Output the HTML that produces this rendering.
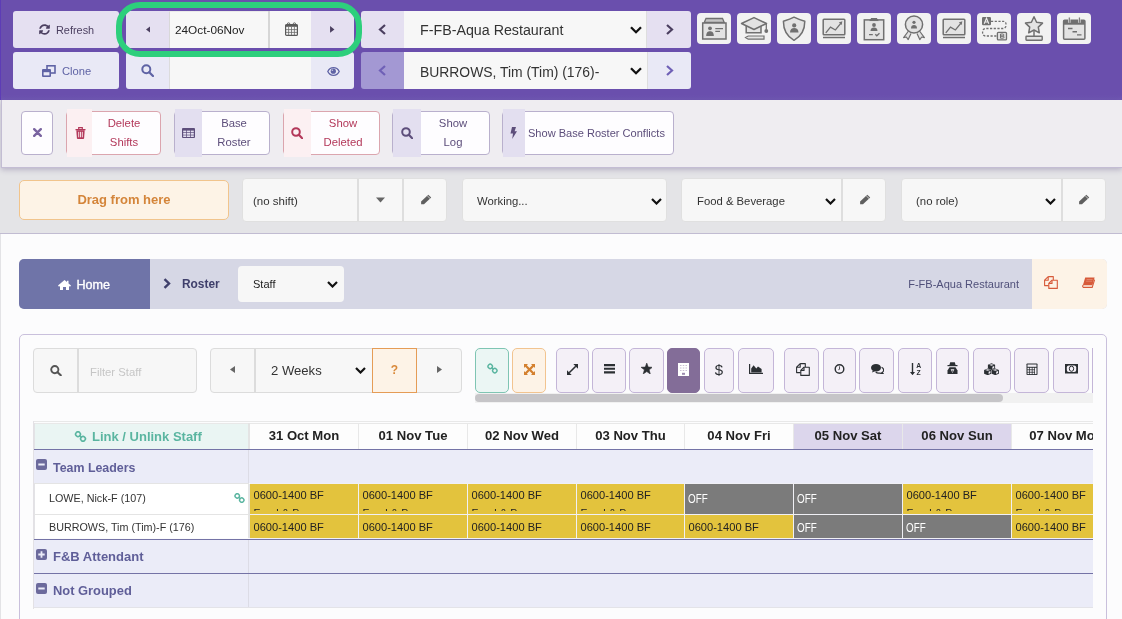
<!DOCTYPE html>
<html><head><meta charset="utf-8">
<style>
*{box-sizing:border-box;margin:0;padding:0}
body{will-change:transform}
html,body{width:1122px;height:619px;overflow:hidden;background:#fcfcfd;font-family:"Liberation Sans",sans-serif;color:#333}
.a{position:absolute}
svg{display:block}
#hdr{left:0;top:0;width:1122px;height:100px;background:linear-gradient(#6a4fad 0,#6a4fad 95px,#7058b3 100px)}
.b1{background:#e5e0f1}
.b2{background:#e9e9f6}
.inp{background:#f7f7f7}
.ib{background:#f2f2f2;border-radius:4px;width:34px;height:31px;top:13px}
#tb{left:1px;top:100px;width:1121px;height:68px;background:#efedf1;border-left:1px solid #c3bdd3;border-bottom:1px solid #c4bdd4;box-shadow:0 2px 5px rgba(80,60,120,.28)}
.tbtn{top:111px;height:44px;border:1px solid #b9b0cd;border-radius:4px;background:#fefdff}
.tbtn.red{border-color:#dba5ae}
.addon{top:109px;height:48px}
#fr{left:0;top:167px;width:1122px;height:67px;background:#e4e4e7;border-bottom:1px solid #c1bcd2}
.sel{top:178px;height:44px;background:#f7f7f7;border-radius:4px;border:1px solid #e0e0e0}
.dv{top:179px;height:42px;width:2px;background:#dedede}
</style></head><body>
<div id="hdr" class="a"></div>
<div class="a" style="left:0;top:0;width:1px;height:100px;background:#5d3cb6"></div>
<!-- row1 -->
<div class="a b1" style="left:13px;top:11px;width:106px;height:37px;border-radius:3px"></div>
<div class="a b1" style="left:126px;top:11px;width:43px;height:37px;border-radius:3px 0 0 3px"></div>
<div class="a inp" style="left:169px;top:11px;width:99px;height:37px;border-left:1px solid #d8d8d8;border-top:1px solid #ebebea"></div>
<div class="a" style="left:268px;top:11px;width:43px;height:37px;background:#f7f7f7;border-left:2px solid #d6d6d6"></div>
<div class="a b1" style="left:311px;top:11px;width:43px;height:37px;border-radius:0 3px 3px 0"></div>
<div class="a b1" style="left:361px;top:11px;width:43px;height:37px;border-radius:3px 0 0 3px"></div>
<div class="a inp" style="left:404px;top:11px;width:243px;height:37px;border-right:1px solid #dedede"></div>
<div class="a b1" style="left:647px;top:11px;width:44px;height:37px;border-radius:0 3px 3px 0"></div>
<div class="a ib" style="left:697px"></div>
<div class="a ib" style="left:737px"></div>
<div class="a ib" style="left:777px"></div>
<div class="a ib" style="left:817px"></div>
<div class="a ib" style="left:857px"></div>
<div class="a ib" style="left:897px"></div>
<div class="a ib" style="left:937px"></div>
<div class="a ib" style="left:977px"></div>
<div class="a ib" style="left:1017px"></div>
<div class="a ib" style="left:1057px"></div>
<!-- row2 -->
<div class="a b2" style="left:13px;top:52px;width:106px;height:37px;border-radius:3px"></div>
<div class="a b2" style="left:126px;top:52px;width:43px;height:37px;border-radius:3px 0 0 3px"></div>
<div class="a inp" style="left:169px;top:52px;width:142px;height:37px;border-left:1px solid #dcdcdc"></div>
<div class="a b2" style="left:311px;top:52px;width:43px;height:37px;border-radius:0 3px 3px 0"></div>
<div class="a" style="left:361px;top:52px;width:43px;height:37px;border-radius:3px 0 0 3px;background:#a398d3"></div>
<div class="a inp" style="left:404px;top:52px;width:243px;height:37px"></div>
<div class="a b2" style="left:647px;top:52px;width:44px;height:37px;border-radius:0 3px 3px 0;border-left:1px solid #dedede"></div>

<div class="a" style="left:697px;top:13px"><svg width="34" height="31" viewBox="0 0 34 31"><path d="M9 5.5H25.5L27.3 9.5H7.2z" fill="#c4c4c4" stroke="#707070" stroke-width="1.3"/><rect x="5.7" y="10" width="23.3" height="16" fill="#e3e3e3" stroke="#707070" stroke-width="1.5"/><circle cx="13" cy="15.3" r="1.9" fill="#707070"/><path d="M9.2 23C9.2 19.5 10.8 18.2 13 18.2S16.8 19.5 16.8 23z" fill="#707070"/><path d="M18.3 15.6H26M18.3 18.4H23" stroke="#707070" stroke-width="1.2"/></svg></div>
<div class="a" style="left:737px;top:13px"><svg width="34" height="31" viewBox="0 0 34 31"><path d="M9.2 13V19.7H24V13" fill="#e3e3e3" stroke="#707070" stroke-width="1.5"/><path d="M4.5 10.5L17 4.6L29.5 10.5L17 16.5z" fill="#e3e3e3" stroke="#707070" stroke-width="1.5" stroke-linejoin="round"/><path d="M29.3 10.5V16.5" stroke="#707070" stroke-width="1.3"/><circle cx="29.3" cy="18" r="1.9" fill="#707070"/><path d="M8.5 24.6L11.2 23H27V26.2H11.2z" fill="#e3e3e3" stroke="#707070" stroke-width="1.2"/></svg></div>
<div class="a" style="left:777px;top:13px"><svg width="34" height="31" viewBox="0 0 34 31"><path d="M17 4.2C13.5 6 9.5 7.3 6.4 8.3C6.4 17 10 23.5 17 27.3C24 23.5 27.8 17 27.8 8.3C24.5 7.3 20.5 6 17 4.2z" fill="#e3e3e3" stroke="#707070" stroke-width="1.5" stroke-linejoin="round"/><circle cx="17.2" cy="12.4" r="2.1" fill="#707070"/><path d="M13 19.6C13 16.4 14.8 15 17.2 15S21.5 16.4 21.5 19.6z" fill="#707070"/></svg></div>
<div class="a" style="left:817px;top:13px"><svg width="34" height="31" viewBox="0 0 34 31"><rect x="6.2" y="6.2" width="21.6" height="15.6" rx="0.8" fill="#e3e3e3" stroke="#707070" stroke-width="1.5"/><path d="M6 24.5H28" stroke="#707070" stroke-width="1.5"/><path d="M8.8 19.8L13.5 14.2L18.4 17L24.2 9.8" fill="none" stroke="#707070" stroke-width="1.3"/><path d="M25.3 8.3L21.8 9.5L24.6 12z" fill="#707070"/></svg></div>
<div class="a" style="left:857px;top:13px"><svg width="34" height="31" viewBox="0 0 34 31"><rect x="7.3" y="6.9" width="19.4" height="19.8" fill="#e3e3e3" stroke="#707070" stroke-width="1.5"/><path d="M13.2 7.6L14.5 5.5H19.5L20.8 7.6z" fill="#707070" stroke="#707070" stroke-width="1.2"/><rect x="9" y="8.2" width="16" height="17" fill="#e3e3e3"/><circle cx="17" cy="12" r="1.9" fill="#707070"/><path d="M13.5 18C13.5 15.5 15 14.4 17 14.4S20.5 15.5 20.5 18z" fill="#707070"/><path d="M12 21.7H15.8M18.3 21.3L19.8 22.8L22.5 20.2" fill="none" stroke="#707070" stroke-width="1.3"/></svg></div>
<div class="a" style="left:897px;top:13px"><svg width="34" height="31" viewBox="0 0 34 31"><path d="M11.5 18L6.6 24.6L9.3 24L11.2 26.6L14 20.5M22.5 18L27.4 24.6L24.7 24L22.8 26.6L20 20.5" fill="#e3e3e3" stroke="#707070" stroke-width="1.2" stroke-linejoin="round"/><circle cx="17" cy="11.5" r="8.6" fill="#e3e3e3" stroke="#707070" stroke-width="1.5"/><circle cx="17" cy="9.3" r="1.6" fill="#707070"/><path d="M14 15.4C14 13 15.3 12 17 12S20 13 20 15.4z" fill="#707070"/></svg></div>
<div class="a" style="left:937px;top:13px"><svg width="34" height="31" viewBox="0 0 34 31"><rect x="6.2" y="6.2" width="21.6" height="15.6" rx="0.8" fill="#e3e3e3" stroke="#707070" stroke-width="1.5"/><path d="M6 24.5H28" stroke="#707070" stroke-width="1.5"/><path d="M8.8 19.8L13.5 14.2L18.4 17L24.2 9.8" fill="none" stroke="#707070" stroke-width="1.3"/><path d="M25.3 8.3L21.8 9.5L24.6 12z" fill="#707070"/></svg></div>
<div class="a" style="left:977px;top:13px"><svg width="34" height="31" viewBox="0 0 34 31"><path d="M14 8.3H26.5A2.8 2.8 0 0 1 29 11.4V12.5A3 3 0 0 1 26 15.5H8.6A3 3 0 0 0 5.6 18.5V20A3 3 0 0 0 8.6 23H20" fill="none" stroke="#707070" stroke-width="1.3" stroke-dasharray="2.2 1.5"/><rect x="5" y="4" width="9" height="8.2" rx="1.2" fill="#707070"/><path d="M7.2 10.8L9.5 5.2L11.8 10.8M8.2 9H10.8" stroke="#eee" stroke-width="1.1" fill="none"/><rect x="20.4" y="19.3" width="9.1" height="7.6" rx="1" fill="#e3e3e3" stroke="#707070" stroke-width="1.3"/><path d="M23.5 21V25.2H26A1 1 0 0 0 26 23.1H23.5H25.8A1 1 0 0 0 25.8 21z" fill="none" stroke="#707070" stroke-width="1"/></svg></div>
<div class="a" style="left:1017px;top:13px"><svg width="34" height="31" viewBox="0 0 34 31"><path d="M17 3.8L19.6 9.3L25.5 10.1L21.3 14.1L22.3 19.8L17 17L11.7 19.8L12.7 14.1L8.5 10.1L14.4 9.3z" fill="#e3e3e3" stroke="#707070" stroke-width="1.5" stroke-linejoin="round"/><path d="M17 17.5V23" stroke="#707070" stroke-width="1.5"/><rect x="9" y="23.2" width="16.2" height="4" rx="0.6" fill="#e3e3e3" stroke="#707070" stroke-width="1.4"/></svg></div>
<div class="a" style="left:1057px;top:13px"><svg width="34" height="31" viewBox="0 0 34 31"><rect x="6.6" y="7.2" width="21.3" height="19" rx="1" fill="#e3e3e3" stroke="#707070" stroke-width="1.5"/><rect x="6.6" y="7.2" width="21.3" height="4.5" fill="#707070"/><path d="M12.3 4.5V9.8M22.4 4.5V9.8" stroke="#e3e3e3" stroke-width="2.4"/><path d="M12.3 4.5V9.8M22.4 4.5V9.8" stroke="#707070" stroke-width="1"/><path d="M11 15.5H15.5M15.5 18.7H20M20 21.9H24.5" stroke="#707070" stroke-width="1.4"/></svg></div>
<!-- header content -->
<div class="a" style="left:39px;top:24px;width:11px;height:11px"><svg width="11" height="11" viewBox="0 0 512 512"><path fill="#4b3f60" d="M370.7 133.3C339.5 104 298.9 88 255.8 88c-77.5.1-144.3 53.2-162.8 126.9-1.300 5.4-6.1 9.2-11.7 9.2H24.1c-7.5 0-13.2-6.8-11.8-14.2C33.9 94.9 134.8 8 256 8c66.4 0 126.8 26.1 171.3 68.7L463 41C478.1 25.9 504 36.6 504 57.9V192c0 13.3-10.7 24-24 24H345.9c-21.4 0-32.1-25.9-17-41l41.8-41.7zM32 296h134.1c21.4 0 32.1 25.9 17 41l-41.8 41.8c31.3 29.3 71.8 45.3 114.9 45.2 77.4-.1 144.3-53.1 162.8-126.8 1.3-5.4 6.1-9.2 11.7-9.2h57.3c7.5 0 13.2 6.8 11.8 14.2C478.1 417.1 377.2 504 256 504c-66.4 0-126.8-26.1-171.3-68.7L49 471C33.900 486.1 8 475.4 8 454.1V320c0-13.3 10.7-24 24-24z"/></svg></div>
<div class="a" style="left:56px;top:22px;font-size:10.9px;line-height:16px;color:#4b3f60">Refresh</div>
<div class="a" style="left:42px;top:65px;width:14px;height:12px"><svg width="14" height="12" viewBox="0 0 14 12"><rect x="5" y="0.8" width="8" height="7.2" fill="none" stroke="#5f63a5" stroke-width="1.6"/><rect x="0" y="4" width="9" height="8" rx="1" fill="#5f63a5"/><rect x="1.6" y="7.2" width="5.8" height="3.2" fill="#e9e9f6"/></svg></div>
<div class="a" style="left:62px;top:62.8px;font-size:11.2px;line-height:16px;color:#5f63a5">Clone</div>
<div class="a" style="left:145.8px;top:26px"><svg width="4.5" height="7" viewBox="0 0 4.5 7"><path d="M4.5 0L0 3.5L4.5 7z" fill="#4b3f60"/></svg></div>
<div class="a" style="left:175px;top:22px;font-size:11.8px;line-height:16px;color:#222">24Oct-06Nov</div>
<div class="a" style="left:285px;top:21.5px"><svg width="13" height="14" viewBox="0 0 13 14"><rect x="0.6" y="2.6" width="11.8" height="10.8" rx="1" fill="#f7f7f7" stroke="#5a5a5a" stroke-width="1.2"/><rect x="0.6" y="2.6" width="11.8" height="2.2" fill="#5a5a5a"/><circle cx="3.6" cy="2" r="1.2" fill="none" stroke="#5a5a5a" stroke-width="0.9"/><circle cx="9.4" cy="2" r="1.2" fill="none" stroke="#5a5a5a" stroke-width="0.9"/><path d="M3.6 4.8V13M6.5 4.8V13M9.4 4.8V13M1 7.6H12M1 10.4H12" stroke="#6a6a6a" stroke-width="0.8"/></svg></div>
<div class="a" style="left:330px;top:26.2px"><svg width="4.5" height="6.8" viewBox="0 0 4.5 7"><path d="M0 0L4.5 3.5L0 7z" fill="#4b3f60"/></svg></div>
<div class="a" style="left:141px;top:64px"><svg width="13" height="13" viewBox="0 0 13 13"><circle cx="5.3" cy="5.3" r="4" fill="none" stroke="#5f63a5" stroke-width="2"/><path d="M8.2 8.2L12 12" stroke="#5f63a5" stroke-width="2.2" stroke-linecap="round"/></svg></div>
<div class="a" style="left:326.5px;top:66.5px"><svg width="13" height="9" viewBox="0 0 13 9"><path d="M6.5 0.7C3.8 0.7 1.7 2.6 0.8 4.5C1.7 6.4 3.8 8.3 6.5 8.3S11.3 6.4 12.2 4.5C11.3 2.6 9.2 0.7 6.5 0.7z" fill="none" stroke="#5f63a5" stroke-width="1.3"/><circle cx="6.3" cy="4.2" r="2.6" fill="#5f63a5"/><circle cx="5.4" cy="3.2" r="0.8" fill="#c9cae6"/></svg></div>
<div class="a" style="left:378px;top:24px"><svg width="9" height="11" viewBox="0 0 9 11"><path d="M7 1L2 5.5L7 10" fill="none" stroke="#4b3f60" stroke-width="2.2"/></svg></div>
<div class="a" style="left:378px;top:65px"><svg width="9" height="11" viewBox="0 0 9 11"><path d="M7 1L2 5.5L7 10" fill="none" stroke="#6f60b6" stroke-width="2.2"/></svg></div>
<div class="a" style="left:665px;top:24px"><svg width="9" height="11" viewBox="0 0 9 11"><path d="M2 1L7 5.5L2 10" fill="none" stroke="#4b3f60" stroke-width="2.2"/></svg></div>
<div class="a" style="left:665px;top:65px"><svg width="9" height="11" viewBox="0 0 9 11"><path d="M2 1L7 5.5L2 10" fill="none" stroke="#6f60b6" stroke-width="2.2"/></svg></div>
<div class="a" style="left:420px;top:21px;font-size:14.25px;line-height:18px;color:#333;white-space:nowrap">F-FB-Aqua Restaurant</div>
<div class="a" style="left:420px;top:62.5px;font-size:13.9px;line-height:18px;color:#333;white-space:nowrap">BURROWS, Tim (Tim) (176)-</div>
<div class="a" style="left:630px;top:26px"><svg width="12" height="8" viewBox="0 0 12 8"><path d="M1 1.2L6 6.2L11 1.2" fill="none" stroke="#111" stroke-width="2.3"/></svg></div>
<div class="a" style="left:630px;top:67px"><svg width="12" height="8" viewBox="0 0 12 8"><path d="M1 1.2L6 6.2L11 1.2" fill="none" stroke="#111" stroke-width="2.3"/></svg></div>
<!-- green ring -->
<div class="a" style="left:116px;top:2px;width:246px;height:55px;border:6px solid #2dcf7c;border-radius:24px"></div>

<div class="a" style="left:0;top:100px;width:1px;height:519px;background:#e3e3e6"></div>
<div id="fr" class="a"></div>
<div id="tb" class="a"></div>
<div class="a tbtn" style="left:21px;width:32px"></div>
<div class="a tbtn red" style="left:66px;width:95px"></div>
<div class="a addon" style="left:67px;width:25px;background:#fcf0f2"></div>
<div class="a tbtn" style="left:174px;width:96px"></div>
<div class="a addon" style="left:175px;width:27px;background:#e3dff0"></div>
<div class="a tbtn red" style="left:283px;width:97px"></div>
<div class="a addon" style="left:284px;width:27px;background:#fcf0f2"></div>
<div class="a tbtn" style="left:392px;width:98px"></div>
<div class="a addon" style="left:393px;width:28px;background:#e3dff0"></div>
<div class="a tbtn" style="left:502px;width:172px"></div>
<div class="a addon" style="left:503px;width:22px;background:#e3dff0"></div>
<div class="a" style="left:33px;top:128px"><svg width="9" height="9" viewBox="0 0 9 9"><path d="M1.2 1.2L7.8 7.8M7.8 1.2L1.2 7.8" stroke="#7a64a0" stroke-width="2.4" stroke-linecap="round"/></svg></div>
<div class="a" style="left:74.5px;top:127px"><svg width="11" height="12" viewBox="0 0 11 12"><path d="M0.5 2H10.5V3.3H0.5z" fill="#b3385a"/><path d="M3.7 2V0.6H7.3V2" fill="none" stroke="#b3385a" stroke-width="1.2"/><path d="M1.3 3.3H9.7L9.1 11.2Q9 12 8.2 12H2.8Q2 12 1.9 11.2z" fill="#b3385a"/><path d="M3.7 4.8V10.3M5.5 4.8V10.3M7.3 4.8V10.3" stroke="#fcf0f2" stroke-width="0.9"/></svg></div>
<div class="a" style="left:74px;top:114px;width:100px;text-align:center;font-size:11.3px;line-height:18.6px;color:#b3385a">Delete<br>Shifts</div>
<div class="a" style="left:182px;top:128px"><svg width="13" height="10" viewBox="0 0 13 10"><rect x="0" y="0" width="13" height="10" rx="1" fill="#5d4e7b"/><g fill="#e3dff0"><rect x="1.2" y="2.6" width="3.1" height="1.7"/><rect x="5" y="2.6" width="3.1" height="1.7"/><rect x="8.8" y="2.6" width="3" height="1.7"/><rect x="1.2" y="5" width="3.1" height="1.7"/><rect x="5" y="5" width="3.1" height="1.7"/><rect x="8.8" y="5" width="3" height="1.7"/><rect x="1.2" y="7.4" width="3.1" height="1.6"/><rect x="5" y="7.4" width="3.1" height="1.6"/><rect x="8.8" y="7.4" width="3" height="1.6"/></g></svg></div>
<div class="a" style="left:184px;top:114px;width:100px;text-align:center;font-size:11.3px;line-height:18.6px;color:#5d4e7b">Base<br>Roster</div>
<div class="a" style="left:291px;top:127px"><svg width="12" height="12" viewBox="0 0 12 12"><circle cx="5" cy="5" r="3.8" fill="none" stroke="#b3385a" stroke-width="2"/><path d="M7.8 7.8L11.2 11.2" stroke="#b3385a" stroke-width="2.2" stroke-linecap="round"/></svg></div>
<div class="a" style="left:293px;top:114px;width:100px;text-align:center;font-size:11.3px;line-height:18.6px;color:#b3385a">Show<br>Deleted</div>
<div class="a" style="left:401px;top:127px"><svg width="12" height="12" viewBox="0 0 12 12"><circle cx="5" cy="5" r="3.8" fill="none" stroke="#5d4e7b" stroke-width="2"/><path d="M7.8 7.8L11.2 11.2" stroke="#5d4e7b" stroke-width="2.2" stroke-linecap="round"/></svg></div>
<div class="a" style="left:403px;top:114px;width:100px;text-align:center;font-size:11.3px;line-height:18.6px;color:#5d4e7b">Show<br>Log</div>
<div class="a" style="left:510px;top:127px"><svg width="7" height="12" viewBox="0 0 7 12"><path d="M2 0H6L4.6 4.3H7L2.2 12L3 6.5H0.5z" fill="#5d4e7b"/></svg></div>
<div class="a" style="left:528px;top:123.7px;font-size:11.05px;line-height:18px;color:#5d4e7b;white-space:nowrap">Show Base Roster Conflicts</div>
<div class="a" style="left:19px;top:180px;width:210px;height:40px;background:#fdf3e6;border:1px solid #f1c48c;border-radius:5px"></div>
<div class="a sel" style="left:242px;width:205px"></div>
<div class="a dv" style="left:357px"></div>
<div class="a dv" style="left:402px"></div>
<div class="a sel" style="left:462px;width:205px"></div>
<div class="a sel" style="left:681px;width:205px"></div>
<div class="a dv" style="left:841px"></div>
<div class="a sel" style="left:901px;width:205px"></div>
<div class="a dv" style="left:1061px"></div>
<div class="a" style="left:19px;top:192px;width:210px;text-align:center;font-size:13px;line-height:16px;font-weight:bold;color:#d4853a">Drag from here</div>
<div class="a" style="left:253px;top:192.5px;font-size:11.5px;line-height:16px;color:#333">(no shift)</div>
<div class="a" style="left:376px;top:197px"><svg width="9" height="6" viewBox="0 0 9 6"><path d="M0 0.5H9L4.5 5.5z" fill="#666"/></svg></div>
<div class="a" style="left:420px;top:194px"><svg width="12" height="11" viewBox="0 0 12 11"><path d="M8.3 0.8L11.2 3.4L4 10.2H1.1V7.4z" fill="#5f5f5f"/><path d="M7.2 1.8L10.1 4.5" stroke="#f7f7f7" stroke-width="0.7"/></svg></div>
<div class="a" style="left:477px;top:192.5px;font-size:11.3px;line-height:16px;color:#333">Working...</div>
<div class="a" style="left:650.5px;top:197.5px"><svg width="11" height="7" viewBox="0 0 11 7"><path d="M1 1L5.5 5.5L10 1" fill="none" stroke="#111" stroke-width="2.2"/></svg></div>
<div class="a" style="left:697px;top:192.5px;font-size:11.3px;line-height:16px;color:#333">Food &amp; Beverage</div>
<div class="a" style="left:825px;top:197.5px"><svg width="11" height="7" viewBox="0 0 11 7"><path d="M1 1L5.5 5.5L10 1" fill="none" stroke="#111" stroke-width="2.2"/></svg></div>
<div class="a" style="left:859px;top:194px"><svg width="12" height="11" viewBox="0 0 12 11"><path d="M8.3 0.8L11.2 3.4L4 10.2H1.1V7.4z" fill="#5f5f5f"/><path d="M7.2 1.8L10.1 4.5" stroke="#f7f7f7" stroke-width="0.7"/></svg></div>
<div class="a" style="left:916px;top:192.5px;font-size:11.4px;line-height:16px;color:#333">(no role)</div>
<div class="a" style="left:1045px;top:197.5px"><svg width="11" height="7" viewBox="0 0 11 7"><path d="M1 1L5.5 5.5L10 1" fill="none" stroke="#111" stroke-width="2.2"/></svg></div>
<div class="a" style="left:1078px;top:194px"><svg width="12" height="11" viewBox="0 0 12 11"><path d="M8.3 0.8L11.2 3.4L4 10.2H1.1V7.4z" fill="#5f5f5f"/><path d="M7.2 1.8L10.1 4.5" stroke="#f7f7f7" stroke-width="0.7"/></svg></div>
<div class="a" style="left:19px;top:259px;width:1088px;height:50px;background:#d6d7e5;border-radius:5px"></div>
<div class="a" style="left:19px;top:259px;width:131px;height:50px;background:#6f74a8;border-radius:5px 0 0 5px"></div>
<div class="a" style="left:1032px;top:259px;width:75px;height:50px;background:#fdf3e7;border-radius:0 5px 5px 0"></div>
<div class="a" style="left:238px;top:266px;width:106px;height:36px;background:#f7f7f7;border-radius:4px"></div>
<div class="a" style="left:58px;top:279.5px"><svg width="13" height="10" viewBox="0 0 13 10"><path d="M6.5 0L0 5.6L1 6.7L2 5.9V10H5V7H8V10H11V5.9L12 6.7L13 5.6L10.5 3.4V0.8H9V2.1z" fill="#fff"/></svg></div>
<div class="a" style="left:76.5px;top:277px;font-size:12.6px;line-height:16px;color:#fff;-webkit-text-stroke:0.35px #fff">Home</div>
<div class="a" style="left:163px;top:277.5px"><svg width="8" height="11" viewBox="0 0 8 11"><path d="M1.5 1.2L6 5.5L1.5 9.8" fill="none" stroke="#3f3f6b" stroke-width="2.4"/></svg></div>
<div class="a" style="left:182px;top:275.5px;font-size:11.9px;line-height:16px;font-weight:bold;color:#3f3f6b">Roster</div>
<div class="a" style="left:253px;top:275.5px;font-size:11.04px;line-height:16px;color:#222">Staff</div>
<div class="a" style="left:327px;top:281px"><svg width="11" height="7" viewBox="0 0 11 7"><path d="M1 1L5.5 5.5L10 1" fill="none" stroke="#111" stroke-width="2.2"/></svg></div>
<div class="a" style="left:808px;top:275.5px;width:211px;text-align:right;font-size:11.03px;line-height:16px;color:#50507a;white-space:nowrap">F-FB-Aqua Restaurant</div>
<div class="a" style="left:1043.5px;top:276px"><svg width="14" height="13" viewBox="0 0 14 13"><path d="M4.2 0.6H9.3V4.2M4.2 0.6L0.6 4.2V9.6H4.8M4.2 0.6V4.2H0.6" fill="none" stroke="#d75a3a" stroke-width="1.1" stroke-linejoin="round"/><path d="M8 4.2H13.3V12.4H4.8V7.4z" fill="#fdf3e7" stroke="#d75a3a" stroke-width="1.1" stroke-linejoin="round"/><path d="M8 4.2V7.4H4.8" fill="none" stroke="#d75a3a" stroke-width="1.1"/></svg></div>
<div class="a" style="left:1082px;top:277px"><svg width="13" height="11" viewBox="0 0 13 11"><path d="M3.2 0.4H12.6L10.4 8.2H0.9z" fill="#d75a3a"/><path d="M1.2 8.2Q0 9.4 1.3 10.4H10.2L12.6 2.6" fill="none" stroke="#d75a3a" stroke-width="1.1"/><path d="M4.6 2.5H10.6M4.1 4.2H10.1" stroke="#e9a08a" stroke-width="0.6"/></svg></div>
<div class="a" style="left:19px;top:334px;width:1088px;height:300px;border:1px solid #c9c0dc;border-radius:5px;background:#fcfcfd"></div>
<div class="a" style="left:33px;top:348px;width:164px;height:45px;background:#f7f7f7;border:1px solid #dcdcdc;border-radius:4px"></div>
<div class="a" style="left:77px;top:349px;width:2px;height:43px;background:#dcdcdc"></div>
<div class="a" style="left:90px;top:363.5px;font-size:11.3px;line-height:16px;color:#c6c6c6">Filter Staff</div>
<div class="a" style="left:50px;top:365px"><svg width="12" height="11" viewBox="0 0 12 11"><circle cx="4.8" cy="4.6" r="3.6" fill="none" stroke="#555" stroke-width="1.9"/><path d="M7.5 7.3L10.8 10.3" stroke="#555" stroke-width="2.1" stroke-linecap="round"/></svg></div>
<div class="a" style="left:210px;top:348px;width:252px;height:45px;background:#f7f7f7;border:1px solid #dcdcdc;border-radius:4px"></div>
<div class="a" style="left:254px;top:349px;width:2px;height:43px;background:#dcdcdc"></div>
<div class="a" style="left:372px;top:348px;width:45px;height:45px;background:#fdf3e7;border:1px solid #e59c56"></div>
<div class="a" style="left:271px;top:362.5px;font-size:13.1px;line-height:16px;color:#333">2 Weeks</div>
<div class="a" style="left:372px;top:361.5px;width:45px;text-align:center;font-size:12px;line-height:16px;font-weight:bold;color:#d9893a">?</div>
<div class="a" style="left:230px;top:366px"><svg width="5" height="7" viewBox="0 0 5 7"><path d="M5 0L0 3.5L5 7z" fill="#666"/></svg></div>
<div class="a" style="left:437px;top:366px"><svg width="5" height="7" viewBox="0 0 5 7"><path d="M0 0L5 3.5L0 7z" fill="#666"/></svg></div>
<div class="a" style="left:355px;top:367px"><svg width="11" height="7" viewBox="0 0 11 7"><path d="M1 1L5.5 5.5L10 1" fill="none" stroke="#111" stroke-width="2.2"/></svg></div>
<div class="a" style="left:475px;top:348px;width:34px;height:45px;border-radius:5px;background:#ebf6f4;border:1px solid #7fc5b3"></div>
<div class="a" style="left:512px;top:348px;width:34px;height:45px;border-radius:5px;background:#fdf3e7;border:1px solid #f2c490"></div>
<div class="a" style="left:556px;top:348px;width:33px;height:45px;border-radius:5px;background:#f4f0f7;border:1px solid #c4b6d8"></div>
<div class="a" style="left:592px;top:348px;width:34px;height:45px;border-radius:5px;background:#f4f0f7;border:1px solid #c4b6d8"></div>
<div class="a" style="left:629px;top:348px;width:35px;height:45px;border-radius:5px;background:#f4f0f7;border:1px solid #c4b6d8"></div>
<div class="a" style="left:667px;top:348px;width:33px;height:45px;border-radius:5px;background:#836d98;border:1px solid #836d98"></div>
<div class="a" style="left:704px;top:348px;width:30px;height:45px;border-radius:5px;background:#f4f0f7;border:1px solid #c4b6d8"></div>
<div class="a" style="left:738px;top:348px;width:36px;height:45px;border-radius:5px;background:#f4f0f7;border:1px solid #c4b6d8"></div>
<div class="a" style="left:784px;top:348px;width:35px;height:45px;border-radius:5px;background:#f4f0f7;border:1px solid #c4b6d8"></div>
<div class="a" style="left:823px;top:348px;width:33px;height:45px;border-radius:5px;background:#f4f0f7;border:1px solid #c4b6d8"></div>
<div class="a" style="left:859px;top:348px;width:35px;height:45px;border-radius:5px;background:#f4f0f7;border:1px solid #c4b6d8"></div>
<div class="a" style="left:898px;top:348px;width:34px;height:45px;border-radius:5px;background:#f4f0f7;border:1px solid #c4b6d8"></div>
<div class="a" style="left:936px;top:348px;width:33px;height:45px;border-radius:5px;background:#f4f0f7;border:1px solid #c4b6d8"></div>
<div class="a" style="left:973px;top:348px;width:38px;height:45px;border-radius:5px;background:#f4f0f7;border:1px solid #c4b6d8"></div>
<div class="a" style="left:1014px;top:348px;width:35px;height:45px;border-radius:5px;background:#f4f0f7;border:1px solid #c4b6d8"></div>
<div class="a" style="left:1053px;top:348px;width:36px;height:45px;border-radius:5px;background:#f4f0f7;border:1px solid #c4b6d8"></div>
<div class="a" style="left:1092px;top:348px;width:1px;height:45px;background:#c4b6d8"></div>
<div class="a" style="left:475px;top:393px;width:618px;height:10px;background:#f1f1f1"></div>
<div class="a" style="left:475px;top:394px;width:528px;height:8px;background:#c6c5c8;border-radius:4px"></div>
<div class="a" style="left:487px;top:363px"><svg width="11" height="11" viewBox="0 0 12 11"><g fill="none" stroke="#5ab5a0" stroke-width="1.6"><rect x="1.2" y="0.9" width="4.6" height="4.6" rx="2.1" transform="rotate(45 3.5 3.2)"/><rect x="6.2" y="5.5" width="4.6" height="4.6" rx="2.1" transform="rotate(45 8.5 7.8)"/><path d="M5 4.7L7 6.3"/></g></svg></div>
<div class="a" style="left:524px;top:363.5px"><svg width="11" height="11" viewBox="0 0 11 11"><path d="M0 0H4L2.8 1.2L5.5 3.9L8.2 1.2L7 0H11V4L9.8 2.8L7.1 5.5L9.8 8.2L11 7V11H7L8.2 9.8L5.5 7.1L2.8 9.8L4 11H0V7L1.2 8.2L3.9 5.5L1.2 2.8L0 4z" fill="#d4802e"/></svg></div>
<div class="a" style="left:567px;top:363.5px"><svg width="11" height="11" viewBox="0 0 11 11"><path d="M6.3 0H11V4.7z" fill="#2b2f33"/><path d="M0 6.3V11H4.7z" fill="#2b2f33"/><path d="M2.2 8.8L8.8 2.2" stroke="#2b2f33" stroke-width="1.6"/></svg></div>
<div class="a" style="left:604px;top:364px"><svg width="11" height="9.5" viewBox="0 0 11 9.5"><path d="M0 1.1H11M0 4.75H11M0 8.4H11" stroke="#2b2f33" stroke-width="2.1"/></svg></div>
<div class="a" style="left:640.5px;top:362.8px"><svg width="11.5" height="11.5" viewBox="0 0 11.5 11.5"><path d="M5.75 0.10L7.22 4.08L11.46 4.25L8.13 6.87L9.28 10.95L5.75 8.60L2.22 10.95L3.37 6.87L0.04 4.25L4.28 4.08z" fill="#2b2f33" stroke="#2b2f33" stroke-width="0.6" stroke-linejoin="round"/></svg></div>
<div class="a" style="left:678px;top:362.5px"><svg width="11" height="13" viewBox="0 0 11 13"><rect x="0" y="0" width="11" height="13" fill="#fff"/><g fill="#c9bfd3"><rect x="2" y="2" width="1.5" height="1"/><rect x="4.75" y="2" width="1.5" height="1"/><rect x="7.5" y="2" width="1.5" height="1"/><rect x="2" y="4.5" width="1.5" height="1"/><rect x="4.75" y="4.5" width="1.5" height="1"/><rect x="7.5" y="4.5" width="1.5" height="1"/><rect x="2" y="7" width="1.5" height="1"/><rect x="4.75" y="7" width="1.5" height="1"/><rect x="7.5" y="7" width="1.5" height="1"/></g><rect x="4" y="9.8" width="3" height="2" fill="#9c8aae"/></svg></div>
<div class="a" style="left:713.5px;top:360.5px;width:11px;text-align:center;font-size:15px;line-height:17px;color:#2b2f33">$</div>
<div class="a" style="left:749px;top:364px"><svg width="14" height="10" viewBox="0 0 14 10"><path d="M0.6 0V9.4H14" fill="none" stroke="#2b2f33" stroke-width="1.2"/><path d="M2.2 8.4V4.6L4.6 1.2L7.3 4.4L9 2.6L12.6 5V8.4z" fill="#2b2f33"/></svg></div>
<div class="a" style="left:795.5px;top:363px"><svg width="14" height="13" viewBox="0 0 14 13"><path d="M4.2 0.6H9.3V4.2M4.2 0.6L0.6 4.2V9.6H4.8M4.2 0.6V4.2H0.6" fill="none" stroke="#2b2f33" stroke-width="1.1" stroke-linejoin="round"/><path d="M8 4.2H13.3V12.4H4.8V7.4z" fill="#f4f0f7" stroke="#2b2f33" stroke-width="1.1" stroke-linejoin="round"/><path d="M8 4.2V7.4H4.8" fill="none" stroke="#2b2f33" stroke-width="1.1"/></svg></div>
<div class="a" style="left:834px;top:363.8px"><svg width="11" height="10" viewBox="0 0 11 10"><circle cx="5.5" cy="5" r="4.3" fill="none" stroke="#2b2f33" stroke-width="1.4"/><path d="M5.5 2.3V5.3L4.3 5.8" fill="none" stroke="#2b2f33" stroke-width="0.8"/></svg></div>
<div class="a" style="left:871px;top:364px"><svg width="13" height="10" viewBox="0 0 13 10"><ellipse cx="5" cy="3.8" rx="5" ry="3.8" fill="#2b2f33"/><path d="M1.8 6.5L1 8.5L4 7.2z" fill="#2b2f33"/><path d="M10.6 3.2Q13 4.5 12.6 6.6Q12.2 8 11 8.6L12.3 10L9 9.1Q6 9.6 4.7 7.9" fill="none" stroke="#2b2f33" stroke-width="1.2"/></svg></div>
<div class="a" style="left:909.5px;top:362.8px"><svg width="12" height="12.5" viewBox="0 0 12 12.5"><path d="M2.5 0V11" stroke="#2b2f33" stroke-width="1.4"/><path d="M0 9L2.5 12.2L5 9z" fill="#2b2f33"/><text x="8.6" y="5.4" font-family="Liberation Sans" font-weight="bold" font-size="6.8" text-anchor="middle" fill="#2b2f33">A</text><text x="8.6" y="12.3" font-family="Liberation Sans" font-weight="bold" font-size="6.8" text-anchor="middle" fill="#2b2f33">Z</text></svg></div>
<div class="a" style="left:947px;top:362.3px"><svg width="11" height="12" viewBox="0 0 11 12"><path d="M3.2 0.3H7.8L8.6 3H2.4z" fill="#2b2f33"/><rect x="0.5" y="3" width="10" height="1.2" fill="#2b2f33"/><path d="M2.5 5.2H8.5L10.5 8.5V12H0.5V8.5z" fill="#2b2f33"/><path d="M3.6 7.3L5.5 11L7.4 7.3" fill="#f4f0f7"/><path d="M4.8 8.4L5.5 10.2L6.2 8.4" fill="#2b2f33"/></svg></div>
<div class="a" style="left:984px;top:362.5px"><svg width="15" height="12.5" viewBox="0 0 15 12.5"><path d="M3.90 1.80L7.50 0.30L11.10 1.80V5.60L7.50 7.10L3.90 5.60z" fill="#2b2f33"/><path d="M5.00 1.85L7.50 1.20L10.00 1.85L7.50 2.70z" fill="#f4f0f7"/><path d="M8.40 3.70L10.20 2.90V5.00L8.40 5.90z" fill="#f4f0f7"/><path d="M0.10 6.90L3.70 5.40L7.30 6.90V10.70L3.70 12.20L0.10 10.70z" fill="#2b2f33"/><path d="M1.20 6.95L3.70 6.30L6.20 6.95L3.70 7.80z" fill="#f4f0f7"/><path d="M4.60 8.80L6.40 8.00V10.10L4.60 11.00z" fill="#f4f0f7"/><path d="M7.70 6.90L11.30 5.40L14.90 6.90V10.70L11.30 12.20L7.70 10.70z" fill="#2b2f33"/><path d="M8.80 6.95L11.30 6.30L13.80 6.95L11.30 7.80z" fill="#f4f0f7"/><path d="M12.20 8.80L14.00 8.00V10.10L12.20 11.00z" fill="#f4f0f7"/></svg></div>
<div class="a" style="left:1026px;top:363px"><svg width="12" height="12" viewBox="0 0 12 12"><rect x="0.5" y="0.5" width="11" height="11.5" rx="0.8" fill="#2b2f33"/><rect x="1.5" y="1.5" width="9" height="2.3" fill="#f4f0f7"/><g fill="#f4f0f7"><rect x="1.5" y="4.8" width="1.8" height="1.6"/><rect x="4" y="4.8" width="1.8" height="1.6"/><rect x="6.5" y="4.8" width="1.8" height="1.6"/><rect x="1.5" y="7.2" width="1.8" height="1.6"/><rect x="4" y="7.2" width="1.8" height="1.6"/><rect x="6.5" y="7.2" width="1.8" height="1.6"/><rect x="1.5" y="9.6" width="1.8" height="1.5"/><rect x="4" y="9.6" width="1.8" height="1.5"/><rect x="6.5" y="9.6" width="1.8" height="1.5"/><rect x="9" y="4.8" width="1.5" height="6.3"/></g></svg></div>
<div class="a" style="left:1064.5px;top:364px"><svg width="13" height="9.5" viewBox="0 0 13 9.5"><rect x="0" y="0" width="13" height="9.5" fill="#2b2f33"/><rect x="1.8" y="1.5" width="9.4" height="6.5" rx="2" fill="#f4f0f7"/><ellipse cx="6.5" cy="4.75" rx="2.2" ry="2.6" fill="none" stroke="#2b2f33" stroke-width="1"/></svg></div>
<div class="a" style="left:33px;top:421px;width:1px;height:188px;background:#e3e1e5"></div>
<div class="a" style="left:34px;top:421px;width:1059px;height:188px;overflow:hidden">
<div class="a" style="left:0px;top:0px;width:1059px;height:1px;background:#e8e8e8"></div>
<div class="a" style="left:0px;top:2px;width:1059px;height:1px;background:#e8e8e8"></div>
<div class="a" style="left:0px;top:2px;width:1px;height:185px;background:#e3e3e6"></div>
<div class="a" style="left:1px;top:3px;width:213px;height:25px;background:#eaf5f3"></div>
<div class="a" style="left:214px;top:2px;width:2px;height:26px;background:#e4e4e4"></div>
<div class="a" style="left:216px;top:3px;width:108px;height:25px;background:#fdfdfd"></div>
<div class="a" style="left:324px;top:2px;width:1px;height:26px;background:#e8e8e8"></div>
<div class="a" style="left:216px;top:7px;width:108px;height:18px;text-align:center;font-size:13.1px;line-height:16px;font-weight:bold;color:#222;white-space:nowrap">31 Oct Mon</div>
<div class="a" style="left:325px;top:3px;width:108px;height:25px;background:#fdfdfd"></div>
<div class="a" style="left:433px;top:2px;width:1px;height:26px;background:#e8e8e8"></div>
<div class="a" style="left:325px;top:7px;width:108px;height:18px;text-align:center;font-size:13.1px;line-height:16px;font-weight:bold;color:#222;white-space:nowrap">01 Nov Tue</div>
<div class="a" style="left:434px;top:3px;width:108px;height:25px;background:#fdfdfd"></div>
<div class="a" style="left:542px;top:2px;width:1px;height:26px;background:#e8e8e8"></div>
<div class="a" style="left:434px;top:7px;width:108px;height:18px;text-align:center;font-size:13.1px;line-height:16px;font-weight:bold;color:#222;white-space:nowrap">02 Nov Wed</div>
<div class="a" style="left:543px;top:3px;width:107px;height:25px;background:#fdfdfd"></div>
<div class="a" style="left:650px;top:2px;width:1px;height:26px;background:#e8e8e8"></div>
<div class="a" style="left:543px;top:7px;width:107px;height:18px;text-align:center;font-size:13.1px;line-height:16px;font-weight:bold;color:#222;white-space:nowrap">03 Nov Thu</div>
<div class="a" style="left:651px;top:3px;width:108px;height:25px;background:#fdfdfd"></div>
<div class="a" style="left:759px;top:2px;width:1px;height:26px;background:#e8e8e8"></div>
<div class="a" style="left:651px;top:7px;width:108px;height:18px;text-align:center;font-size:13.1px;line-height:16px;font-weight:bold;color:#222;white-space:nowrap">04 Nov Fri</div>
<div class="a" style="left:760px;top:3px;width:108px;height:25px;background:#dcd6ec"></div>
<div class="a" style="left:868px;top:2px;width:1px;height:26px;background:#e8e8e8"></div>
<div class="a" style="left:760px;top:7px;width:108px;height:18px;text-align:center;font-size:13.1px;line-height:16px;font-weight:bold;color:#222;white-space:nowrap">05 Nov Sat</div>
<div class="a" style="left:869px;top:3px;width:108px;height:25px;background:#dcd6ec"></div>
<div class="a" style="left:977px;top:2px;width:1px;height:26px;background:#e8e8e8"></div>
<div class="a" style="left:869px;top:7px;width:108px;height:18px;text-align:center;font-size:13.1px;line-height:16px;font-weight:bold;color:#222;white-space:nowrap">06 Nov Sun</div>
<div class="a" style="left:978px;top:3px;width:108px;height:25px;background:#fdfdfd"></div>
<div class="a" style="left:1086px;top:2px;width:1px;height:26px;background:#e8e8e8"></div>
<div class="a" style="left:978px;top:7px;width:108px;height:18px;text-align:center;font-size:13.1px;line-height:16px;font-weight:bold;color:#222;white-space:nowrap">07 Nov Mon</div>
<div class="a" style="left:58px;top:7.5px;width:120px;height:16px;font-size:13px;line-height:16px;font-weight:bold;color:#5ab5a0;white-space:nowrap">Link / Unlink Staff</div>
<div class="a" style="left:39.5px;top:10px;width:13px;height:11px;"><svg width="13" height="11" viewBox="0 0 12 11"><g fill="none" stroke="#5ab5a0" stroke-width="1.6"><rect x="1.2" y="0.9" width="4.6" height="4.6" rx="2.1" transform="rotate(45 3.5 3.2)"/><rect x="6.2" y="5.5" width="4.6" height="4.6" rx="2.1" transform="rotate(45 8.5 7.8)"/><path d="M5 4.7L7 6.3"/></g></svg></div>
<div class="a" style="left:0px;top:28px;width:1059px;height:1px;background:#7473a6"></div>
<div class="a" style="left:0px;top:29px;width:1059px;height:0.5px;background:#9c9bc3"></div>
<div class="a" style="left:0px;top:29px;width:1059px;height:33px;background:#ebecf8"></div>
<div class="a" style="left:214px;top:29px;width:1px;height:33px;background:#dcdce6"></div>
<div class="a" style="left:2px;top:38px;width:11px;height:11px;"><svg width="11" height="11" viewBox="0 0 11 11"><rect width="11" height="11" rx="2" fill="#6c6a9c"/><path d="M2.3 5.5H8.7" stroke="#ebecf8" stroke-width="2"/></svg></div>
<div class="a" style="left:19px;top:38.5px;width:200px;height:16px;font-size:12.4px;line-height:16px;font-weight:bold;color:#5f5e98;white-space:nowrap">Team Leaders</div>
<div class="a" style="left:1px;top:63px;width:213px;height:30px;background:#fff"></div>
<div class="a" style="left:1px;top:94px;width:213px;height:23px;background:#fff"></div>
<div class="a" style="left:0px;top:62px;width:215px;height:1px;background:#e4e4e4"></div>
<div class="a" style="left:0px;top:93px;width:215px;height:1px;background:#e4e4e4"></div>
<div class="a" style="left:214px;top:63px;width:2px;height:54px;background:#e4e4e4"></div>
<div class="a" style="left:15px;top:69px;width:200px;height:16px;font-size:10.75px;line-height:16px;color:#333;white-space:nowrap">LOWE, Nick-F (107)</div>
<div class="a" style="left:15px;top:98px;width:200px;height:16px;font-size:10.75px;line-height:16px;color:#333;white-space:nowrap">BURROWS, Tim (Tim)-F (176)</div>
<div class="a" style="left:200px;top:71.5px;width:11px;height:10px;"><svg width="11" height="10" viewBox="0 0 12 11"><g fill="none" stroke="#5ab5a0" stroke-width="1.6"><rect x="1.2" y="0.9" width="4.6" height="4.6" rx="2.1" transform="rotate(45 3.5 3.2)"/><rect x="6.2" y="5.5" width="4.6" height="4.6" rx="2.1" transform="rotate(45 8.5 7.8)"/><path d="M5 4.7L7 6.3"/></g></svg></div>
<div class="a" style="left:216px;top:62px;width:843px;height:56px;background:#f0f0f5"></div>
<div class="a" style="left:216px;top:63px;width:108px;height:30px;background:#e3c33d"></div>
<div class="a" style="left:216px;top:63px;width:108px;height:27px;overflow:hidden"><div style="padding:1.5px 0 0 3.5px;font-size:11.1px;line-height:18px;color:#222;white-space:nowrap">0600-1400 BF<br>Food &amp; Beverage</div></div>
<div class="a" style="left:216px;top:94px;width:108px;height:23px;background:#e3c33d"></div>
<div class="a" style="left:219.5px;top:97.5px;width:100px;height:16px;font-size:11.1px;line-height:16px;color:#222;white-space:nowrap">0600-1400 BF</div>
<div class="a" style="left:325px;top:63px;width:108px;height:30px;background:#e3c33d"></div>
<div class="a" style="left:325px;top:63px;width:108px;height:27px;overflow:hidden"><div style="padding:1.5px 0 0 3.5px;font-size:11.1px;line-height:18px;color:#222;white-space:nowrap">0600-1400 BF<br>Food &amp; Beverage</div></div>
<div class="a" style="left:325px;top:94px;width:108px;height:23px;background:#e3c33d"></div>
<div class="a" style="left:328.5px;top:97.5px;width:100px;height:16px;font-size:11.1px;line-height:16px;color:#222;white-space:nowrap">0600-1400 BF</div>
<div class="a" style="left:434px;top:63px;width:108px;height:30px;background:#e3c33d"></div>
<div class="a" style="left:434px;top:63px;width:108px;height:27px;overflow:hidden"><div style="padding:1.5px 0 0 3.5px;font-size:11.1px;line-height:18px;color:#222;white-space:nowrap">0600-1400 BF<br>Food &amp; Beverage</div></div>
<div class="a" style="left:434px;top:94px;width:108px;height:23px;background:#e3c33d"></div>
<div class="a" style="left:437.5px;top:97.5px;width:100px;height:16px;font-size:11.1px;line-height:16px;color:#222;white-space:nowrap">0600-1400 BF</div>
<div class="a" style="left:543px;top:63px;width:107px;height:30px;background:#e3c33d"></div>
<div class="a" style="left:543px;top:63px;width:107px;height:27px;overflow:hidden"><div style="padding:1.5px 0 0 3.5px;font-size:11.1px;line-height:18px;color:#222;white-space:nowrap">0600-1400 BF<br>Food &amp; Beverage</div></div>
<div class="a" style="left:543px;top:94px;width:107px;height:23px;background:#e3c33d"></div>
<div class="a" style="left:546.5px;top:97.5px;width:100px;height:16px;font-size:11.1px;line-height:16px;color:#222;white-space:nowrap">0600-1400 BF</div>
<div class="a" style="left:651px;top:63px;width:108px;height:30px;background:#7b7b7b"></div>
<div class="a" style="left:654px;top:69.5px;width:100px;height:16px;font-size:12px;line-height:16px;color:#fff;transform:scaleX(0.82);transform-origin:0 0;white-space:nowrap">OFF</div>
<div class="a" style="left:651px;top:94px;width:108px;height:23px;background:#e3c33d"></div>
<div class="a" style="left:654.5px;top:97.5px;width:100px;height:16px;font-size:11.1px;line-height:16px;color:#222;white-space:nowrap">0600-1400 BF</div>
<div class="a" style="left:760px;top:63px;width:108px;height:30px;background:#7b7b7b"></div>
<div class="a" style="left:763px;top:69.5px;width:100px;height:16px;font-size:12px;line-height:16px;color:#fff;transform:scaleX(0.82);transform-origin:0 0;white-space:nowrap">OFF</div>
<div class="a" style="left:760px;top:94px;width:108px;height:23px;background:#7b7b7b"></div>
<div class="a" style="left:763px;top:98.5px;width:100px;height:16px;font-size:12px;line-height:16px;color:#fff;transform:scaleX(0.82);transform-origin:0 0;white-space:nowrap">OFF</div>
<div class="a" style="left:869px;top:63px;width:108px;height:30px;background:#e3c33d"></div>
<div class="a" style="left:869px;top:63px;width:108px;height:27px;overflow:hidden"><div style="padding:1.5px 0 0 3.5px;font-size:11.1px;line-height:18px;color:#222;white-space:nowrap">0600-1400 BF<br>Food &amp; Beverage</div></div>
<div class="a" style="left:869px;top:94px;width:108px;height:23px;background:#7b7b7b"></div>
<div class="a" style="left:872px;top:98.5px;width:100px;height:16px;font-size:12px;line-height:16px;color:#fff;transform:scaleX(0.82);transform-origin:0 0;white-space:nowrap">OFF</div>
<div class="a" style="left:978px;top:63px;width:108px;height:30px;background:#e3c33d"></div>
<div class="a" style="left:978px;top:63px;width:108px;height:27px;overflow:hidden"><div style="padding:1.5px 0 0 3.5px;font-size:11.1px;line-height:18px;color:#222;white-space:nowrap">0600-1400 BF<br>Food &amp; Beverage</div></div>
<div class="a" style="left:978px;top:94px;width:108px;height:23px;background:#e3c33d"></div>
<div class="a" style="left:981.5px;top:97.5px;width:100px;height:16px;font-size:11.1px;line-height:16px;color:#222;white-space:nowrap">0600-1400 BF</div>
<div class="a" style="left:0px;top:118px;width:1059px;height:1px;background:#7473a6"></div>
<div class="a" style="left:0px;top:119px;width:1059px;height:33px;background:#ebecf8"></div>
<div class="a" style="left:214px;top:119px;width:1px;height:33px;background:#dcdce6"></div>
<div class="a" style="left:2px;top:127.5px;width:11px;height:11px;"><svg width="11" height="11" viewBox="0 0 11 11"><rect width="11" height="11" rx="2" fill="#6c6a9c"/><path d="M2.3 5.5H8.7M5.5 2.3V8.7" stroke="#ebecf8" stroke-width="1.8"/></svg></div>
<div class="a" style="left:19px;top:127.5px;width:200px;height:16px;font-size:13px;line-height:16px;font-weight:bold;color:#5f5e98;white-space:nowrap">F&amp;B Attendant</div>
<div class="a" style="left:0px;top:152px;width:1059px;height:1px;background:#7473a6"></div>
<div class="a" style="left:0px;top:153px;width:1059px;height:33px;background:#ebecf8"></div>
<div class="a" style="left:214px;top:153px;width:1px;height:33px;background:#dcdce6"></div>
<div class="a" style="left:2px;top:161.5px;width:11px;height:11px;"><svg width="11" height="11" viewBox="0 0 11 11"><rect width="11" height="11" rx="2" fill="#6c6a9c"/><path d="M2.3 5.5H8.7" stroke="#ebecf8" stroke-width="2"/></svg></div>
<div class="a" style="left:19px;top:161.79999999999995px;width:200px;height:16px;font-size:12.9px;line-height:16px;font-weight:bold;color:#5f5e98;white-space:nowrap">Not Grouped</div>
<div class="a" style="left:0px;top:186px;width:1059px;height:1px;background:#e3e3e8"></div>
</div>

</body></html>
